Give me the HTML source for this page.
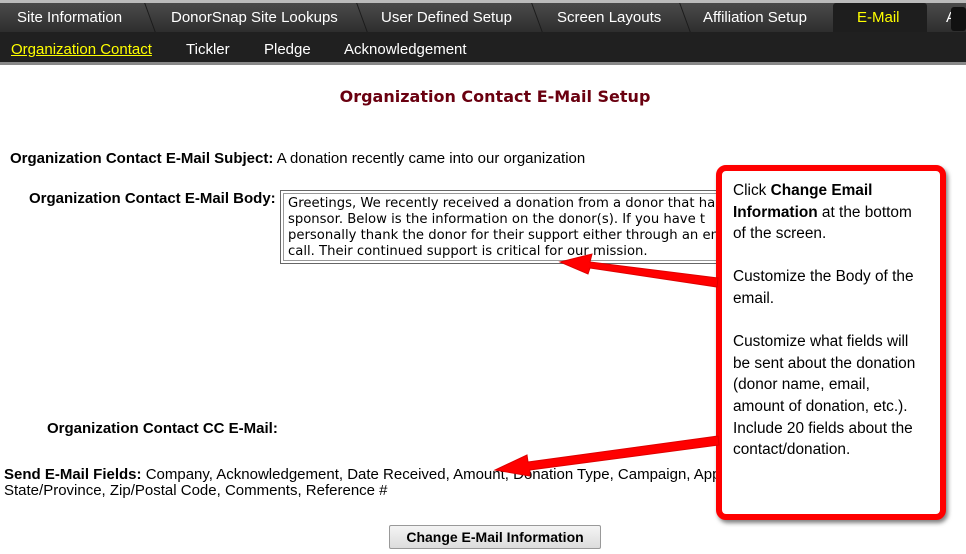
<!DOCTYPE html>
<html><head><meta charset="utf-8"><style>
*{margin:0;padding:0;box-sizing:border-box}
body{width:966px;height:554px;overflow:hidden;background:#fff;position:relative;font-family:"Liberation Sans",sans-serif;font-size:15px;color:#000}
.top{position:absolute;left:0;top:0;width:966px;height:32px;background:linear-gradient(#4a4a4a,#2e2e2e);border-top:3px solid #bbb}
.tab{position:absolute;top:6px;color:#fff;font-size:15px;font-family:"Liberation Sans",sans-serif}
.sep{position:absolute;top:0;width:1px;height:32px;background:#1a1a1a;transform:skewX(20deg)}
.active{position:absolute;left:833px;top:0px;width:94px;height:32px;background:#1e1e1e;border-radius:3px 3px 0 0}
.sub{position:absolute;left:0;top:32px;width:966px;height:33px;background:#202020;border-bottom:3px solid #888}
.st{position:absolute;top:9px;color:#fff;font-size:15px}
.a{position:absolute}
.b{font-weight:bold}
.ta{position:absolute;left:280px;top:190px;width:450px;height:74px;border:1px solid #666;padding:2px;}
.ta div{border:1px solid #999;height:100%;padding:2px 4px;font-family:"DejaVu Sans",sans-serif;font-size:13.2px;line-height:16px;color:#000;overflow:hidden;white-space:nowrap}
.call{position:absolute;left:716px;top:165px;width:230px;height:355px;border:6px solid #f00;border-radius:10px;background:#fff;box-shadow:2px 3px 4px rgba(0,0,0,.5);padding:9px 0 0 11px;font-size:15.4px;line-height:21.6px}
.btn{position:absolute;left:389px;top:525px;width:212px;height:24px;border:1px solid #999;background:linear-gradient(#f4f4f4,#dcdcdc);font-weight:bold;font-size:14px;text-align:center;line-height:22px;border-radius:2px}
</style></head><body>
<div class="top">
<div class="active"></div>
<span class="tab" style="left:17px">Site Information</span>
<span class="sep" style="left:150px"></span>
<span class="tab" style="left:171px">DonorSnap Site Lookups</span>
<span class="sep" style="left:362px"></span>
<span class="tab" style="left:381px">User Defined Setup</span>
<span class="sep" style="left:537px"></span>
<span class="tab" style="left:557px">Screen Layouts</span>
<span class="sep" style="left:685px"></span>
<span class="tab" style="left:703px">Affiliation Setup</span>
<span class="tab" style="left:857px;color:#ff0">E-Mail</span>
<span class="tab" style="left:946px">A</span>
<div style="position:absolute;left:951px;top:4px;width:15px;height:24px;background:#111;border-radius:3px"></div>
</div>
<div class="sub">
<span class="st" style="left:11px;color:#ff0;text-decoration:underline">Organization Contact</span>
<span class="st" style="left:186px">Tickler</span>
<span class="st" style="left:264px">Pledge</span>
<span class="st" style="left:344px">Acknowledgement</span>
</div>
<div class="a b" style="left:0;width:990px;text-align:center;top:87px;color:#6a0010;font-family:'DejaVu Sans',sans-serif;font-size:16px">Organization Contact E-Mail Setup</div>
<div class="a" style="left:10px;top:150px"><b>Organization Contact E-Mail Subject:</b> A donation recently came into our organization</div>
<div class="a b" style="left:29px;top:190px">Organization Contact E-Mail Body:</div>
<div class="ta"><div>Greetings, We recently received a donation from a donor that ha<br>sponsor. Below is the information on the donor(s). If you have t<br>personally thank the donor for their support either through an em<br>call. Their continued support is critical for our mission.</div></div>
<div class="a b" style="left:47px;top:420px">Organization Contact CC E-Mail:</div>
<div class="a" style="left:4px;top:467px;line-height:16px;width:960px"><b>Send E-Mail Fields:</b> Company, Acknowledgement, Date Received, Amount, Donation Type, Campaign, Appeal, Fund, Letter, Email,<br>State/Province, Zip/Postal Code, Comments, Reference #</div>
<div class="btn">Change E-Mail Information</div>
<div class="call">Click <b>Change Email<br>Information</b> at the bottom<br>of the screen.<br><br>Customize the Body of the<br>email.<br><br>Customize what fields will<br>be sent about the donation<br>(donor name, email,<br>amount of donation, etc.).<br>Include 20 fields about the<br>contact/donation.</div>
<svg class="a" style="left:0;top:0" width="966" height="554">
<g fill="#f00" stroke="#d00" stroke-width="1">
<polygon points="718,278 590,262 592,254 560,262 588,274 590,268 717,287"/>
<polygon points="718,436 528,462 527,455 495,470 530,476 530,470 719,445"/>
</g>
</svg>
</body></html>
